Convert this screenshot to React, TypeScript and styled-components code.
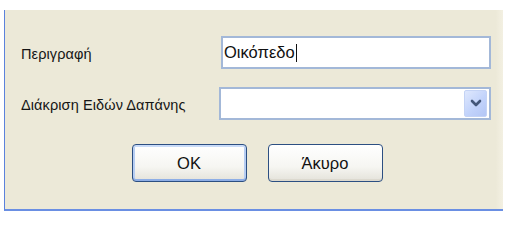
import styled, { createGlobalStyle } from "styled-components";

const GlobalStyle = createGlobalStyle`
  html, body {
    margin: 0;
    padding: 0;
    background: #ffffff;
  }
  body {
    font-family: "Liberation Sans", Arial, sans-serif;
  }
`;

const ChevronIcon = () => (
  <svg width="12" height="9" viewBox="0 0 12 9">
    <path
      d="M2 2 L6 6 L10 2"
      fill="none"
      stroke="#44577a"
      strokeWidth="2.6"
      strokeLinecap="round"
      strokeLinejoin="round"
    />
  </svg>
);

export default function App() {
  return (
    <>
      <GlobalStyle />
      <Page>
        <Dialog>
          <Form>
            <Label>Περιγραφή</Label>
            <TextField>
              <FieldText>Οικόπεδο</FieldText>
              <Caret />
            </TextField>

            <Label>Διάκριση Ειδών Δαπάνης</Label>
            <ComboBox>
              <ComboValue />
              <ComboButton>
                <ChevronIcon />
              </ComboButton>
            </ComboBox>
          </Form>

          <Buttons>
            <Button $isDefault>OK</Button>
            <Button>Άκυρο</Button>
          </Buttons>
        </Dialog>
      </Page>
    </>
  );
}

const Page = styled.div`
  width: 524px;
  height: 228px;
  padding: 10px 0 0 4px;
  box-sizing: border-box;
`;

const Dialog = styled.div`
  width: 499px;
  height: 201px;
  box-sizing: border-box;
  background: linear-gradient(to right, #ece9d8 0%, #ece9d8 98.5%, #f3f0e2 100%);
  border-left: 1.5px solid #5b82dc;
  border-bottom: 2px solid #6a8fe3;
  padding: 26px 0 0 16px;
  display: flex;
  flex-direction: column;
`;

const Form = styled.div`
  display: grid;
  grid-template-columns: 200px 270px;
  grid-auto-rows: 33px;
  row-gap: 18px;
  align-items: center;
`;

const Label = styled.div`
  font-size: 14.5px;
  color: #151515;
  letter-spacing: 0.1px;
  padding-top: 2px;
`;

const TextField = styled.div`
  height: 33px;
  box-sizing: border-box;
  border: 2px solid #a3b8d8;
  background: #ffffff;
  display: flex;
  align-items: center;
  padding-left: 1px;
`;

const FieldText = styled.span`
  font-size: 16.5px;
  color: #111111;
`;

const Caret = styled.span`
  width: 1.5px;
  height: 18px;
  background: #111111;
  margin-left: 1px;
`;

const ComboBox = styled(TextField)`
  padding: 0 2px 0 0;
  margin-left: -2px;
`;

const ComboValue = styled.div`
  flex: 1;
`;

const ComboButton = styled.div`
  width: 23px;
  height: 27px;
  box-sizing: border-box;
  border: 1px solid #c4d3f5;
  border-radius: 2px;
  background: linear-gradient(135deg, #dfe8fd 0%, #c2d3fb 55%, #b3c6f5 100%);
  display: flex;
  align-items: center;
  justify-content: center;
`;

const Buttons = styled.div`
  display: flex;
  justify-content: center;
  gap: 21px;
  margin-top: 24px;
  padding-right: 10px;
`;

const Button = styled.button<{ $isDefault?: boolean }>`
  width: 115px;
  height: 38px;
  box-sizing: border-box;
  font-family: "Liberation Sans", Arial, sans-serif;
  font-size: 16.5px;
  color: #111111;
  border: 1.5px solid #2c4f82;
  border-radius: 4px;
  background: linear-gradient(to bottom, #ffffff 0%, #f6f6f2 60%, #e4e2da 100%);
  box-shadow: ${({ $isDefault }) =>
    $isDefault
      ? "inset 0 2px 0 #c9dbf8, inset 0 -2px 0 #8eaee6, inset 2px 0 0 #b6cdf2, inset -2px 0 0 #b6cdf2"
      : "inset 0 -2px 0 #dcd9cf"};
  padding: 0;
`;
